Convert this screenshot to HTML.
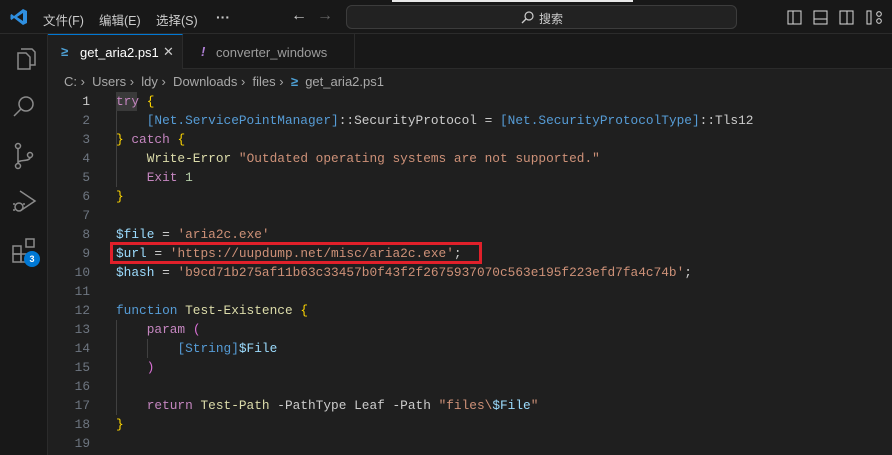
<!DOCTYPE html>
<html style="width:892px;height:455px;overflow:hidden"><head><meta charset="utf-8"><style>
*{margin:0;padding:0;box-sizing:border-box}
body{width:892px;height:455px;background:#1f1f1f;overflow:hidden;position:relative;font-family:"Liberation Sans","Noto Sans CJK SC",sans-serif;color:#ccc}
.abs{position:absolute}
#title{left:0;top:0;width:892px;height:34px;background:#181818;border-bottom:1px solid #2b2b2b}
#act{left:0;top:34px;width:48px;height:421px;background:#181818;border-right:1px solid #2b2b2b}
#tabs{left:48px;top:34px;width:844px;height:35px;background:#181818;border-bottom:1px solid #2b2b2b}
.menu{top:10px;font-size:12.5px;color:#ccc}
.code{left:0;top:92px;width:892px;height:363px;overflow:hidden;font-family:"Liberation Mono",monospace;font-size:12.8px;line-height:19px;white-space:pre}
.ln{position:absolute;left:50px;width:40px;text-align:right;color:#6e7681}
.tx{position:absolute;left:116px;color:#ccc}
.k{color:#c586c0}.b{color:#569cd6}.v{color:#9cdcfe}.s{color:#ce9178}.f{color:#dcdcaa}.y{color:#ffd700}.p{color:#da70d6}.n{color:#b5cea8}.t{color:#4ec9b0}
</style></head><body>
<div class="abs" id="title"></div>
<div class="abs" style="left:392px;top:0;width:241px;height:2px;background:#e8e8e8"></div>
<svg class="abs" style="left:10px;top:8px" width="18" height="18" viewBox="0 0 18 18"><path d="M13 1 L17 3 V15 L13 17 L4 10 L1.5 12 L0.5 11 V7 L1.5 6 L4 8 L13 1Z M13 5 L7 9 L13 13Z" fill="#2f8fe0"/></svg>
<div class="abs menu" style="left:43px">文件(F)</div>
<div class="abs menu" style="left:99px">编辑(E)</div>
<div class="abs menu" style="left:156px">选择(S)</div>
<div class="abs menu" style="left:216px;top:9px;font-size:14px;font-weight:bold">···</div>
<div class="abs menu" style="left:291px;top:7px;font-size:16px">←</div>
<div class="abs menu" style="left:317px;top:7px;font-size:16px;color:#666">→</div>
<div class="abs" style="left:346px;top:5px;width:391px;height:24px;border:1px solid #3c3c3c;border-radius:6px;background:#222"></div>
<svg class="abs" style="left:521px;top:11px" width="13" height="13" viewBox="0 0 13 13"><circle cx="8" cy="5" r="4" fill="none" stroke="#ccc" stroke-width="1.2"/><path d="M5 8 L1 12" stroke="#ccc" stroke-width="1.3"/></svg>
<div class="abs menu" style="left:539px;top:10px;font-size:12px">搜索</div>
<svg class="abs" style="left:787px;top:10px" width="100" height="15" viewBox="0 0 100 15" fill="none" stroke="#ccc" stroke-width="1.1"><rect x="1" y="1" width="13" height="13"/><path d="M6 1V14"/><rect x="27" y="1" width="13" height="13"/><path d="M27 9H40"/><rect x="53" y="1" width="13" height="13"/><path d="M60 1V14"/><rect x="80" y="1" width="4" height="13"/><circle cx="92" cy="4" r="2.3"/><circle cx="92" cy="11" r="2.3"/></svg>
<div class="abs" id="act"></div>
<svg class="abs" style="left:11px;top:46px" width="26" height="220" viewBox="0 0 26 220" fill="none" stroke="#8b8b8b" stroke-width="1.5">
<path d="M7 7V23H19V11L15 7Z M10 3H21L24 6V19H19"/>
<circle cx="15" cy="58" r="7"/><path d="M10 63 L3 70"/>
<circle cx="7" cy="100" r="2.5"/><circle cx="7" cy="120" r="2.5"/><circle cx="19" cy="109" r="2.5"/><path d="M7 102.5V117.5 M19 111.5 C19 116 7 113 7 117"/>
<path d="M9 145 L24 155 L9 165" /><circle cx="8" cy="161" r="4"/><path d="M2 158H4 M2 164H4 M12 158H14"/>
<rect x="2" y="200" width="8" height="8"/><rect x="2" y="208" width="8" height="8"/><rect x="10" y="208" width="8" height="8"/><rect x="15" y="193" width="8" height="8"/>
</svg>
<div class="abs" style="left:24px;top:251px;width:16px;height:16px;border-radius:8px;background:#0078d4;color:#fff;font-size:9px;font-weight:bold;text-align:center;line-height:16px">3</div>
<div class="abs" id="tabs"></div>
<div class="abs" style="left:48px;top:34px;width:135px;height:35px;background:#1f1f1f;border-top:1px solid #0078d4;border-right:1px solid #2b2b2b"></div>
<div class="abs" style="left:61px;top:44px;font-size:13px;color:#4fa3d9;font-weight:bold">≥</div>
<div class="abs" style="left:80px;top:45px;font-size:13px;color:#fff">get_aria2.ps1</div>
<div class="abs" style="left:163px;top:44px;font-size:13px;color:#ccc">✕</div>
<div class="abs" style="left:201px;top:44px;font-size:13px;color:#b180d7;font-weight:bold;font-style:italic">!</div>
<div class="abs" style="left:216px;top:45px;font-size:13px;color:#9d9d9d">converter_windows</div>
<div class="abs" style="left:354px;top:34px;width:1px;height:35px;background:#2b2b2b"></div>
<div class="abs" style="left:64px;top:74px;font-size:13px;color:#a9a9a9;white-space:pre">C: ›  Users ›  ldy ›  Downloads ›  files ›  <span style="color:#4fa3d9;font-weight:bold">≥</span>  get_aria2.ps1</div>
<div class="abs" style="left:116px;top:92px;width:21px;height:19px;background:#3a3a3a"></div>
<div class="abs" style="left:116px;top:111px;width:1px;height:76px;background:#404040"></div>
<div class="abs" style="left:116px;top:320px;width:1px;height:95px;background:#404040"></div>
<div class="abs" style="left:147px;top:339px;width:1px;height:19px;background:#404040"></div>
<div class="abs code">
<div class="ln" style="top:0;color:#ccc">1</div><div class="tx" style="top:0"><span class="k">try</span> <span class="y">{</span></div>
<div class="ln" style="top:19px">2</div><div class="tx" style="top:19px">    <span class="b">[Net.ServicePointManager]</span>::SecurityProtocol = <span class="b">[Net.SecurityProtocolType]</span>::Tls12</div>
<div class="ln" style="top:38px">3</div><div class="tx" style="top:38px"><span class="y">}</span> <span class="k">catch</span> <span class="y">{</span></div>
<div class="ln" style="top:57px">4</div><div class="tx" style="top:57px">    <span class="f">Write-Error</span> <span class="s">"Outdated operating systems are not supported."</span></div>
<div class="ln" style="top:76px">5</div><div class="tx" style="top:76px">    <span class="k">Exit</span> <span class="n">1</span></div>
<div class="ln" style="top:95px">6</div><div class="tx" style="top:95px"><span class="y">}</span></div>
<div class="ln" style="top:114px">7</div>
<div class="ln" style="top:133px">8</div><div class="tx" style="top:133px"><span class="v">$file</span> = <span class="s">'aria2c.exe'</span></div>
<div class="ln" style="top:152px">9</div><div class="tx" style="top:152px"><span class="v">$url</span> = <span class="s">'https://uupdump.net/misc/aria2c.exe'</span>;</div>
<div class="ln" style="top:171px">10</div><div class="tx" style="top:171px"><span class="v">$hash</span> = <span class="s">'b9cd71b275af11b63c33457b0f43f2f2675937070c563e195f223efd7fa4c74b'</span>;</div>
<div class="ln" style="top:190px">11</div>
<div class="ln" style="top:209px">12</div><div class="tx" style="top:209px"><span class="b">function</span> <span class="f">Test-Existence</span> <span class="y">{</span></div>
<div class="ln" style="top:228px">13</div><div class="tx" style="top:228px">    <span class="k">param</span> <span class="p">(</span></div>
<div class="ln" style="top:247px">14</div><div class="tx" style="top:247px">        <span class="b">[String]</span><span class="v">$File</span></div>
<div class="ln" style="top:266px">15</div><div class="tx" style="top:266px">    <span class="p">)</span></div>
<div class="ln" style="top:285px">16</div>
<div class="ln" style="top:304px">17</div><div class="tx" style="top:304px">    <span class="k">return</span> <span class="f">Test-Path</span> -PathType Leaf -Path <span class="s">"files\<span class="v">$File</span>"</span></div>
<div class="ln" style="top:323px">18</div><div class="tx" style="top:323px"><span class="y">}</span></div>
<div class="ln" style="top:342px">19</div>
</div>
<div class="abs" style="left:110px;top:242px;width:372px;height:22px;border:3px solid #e0202a"></div>
</body></html>
